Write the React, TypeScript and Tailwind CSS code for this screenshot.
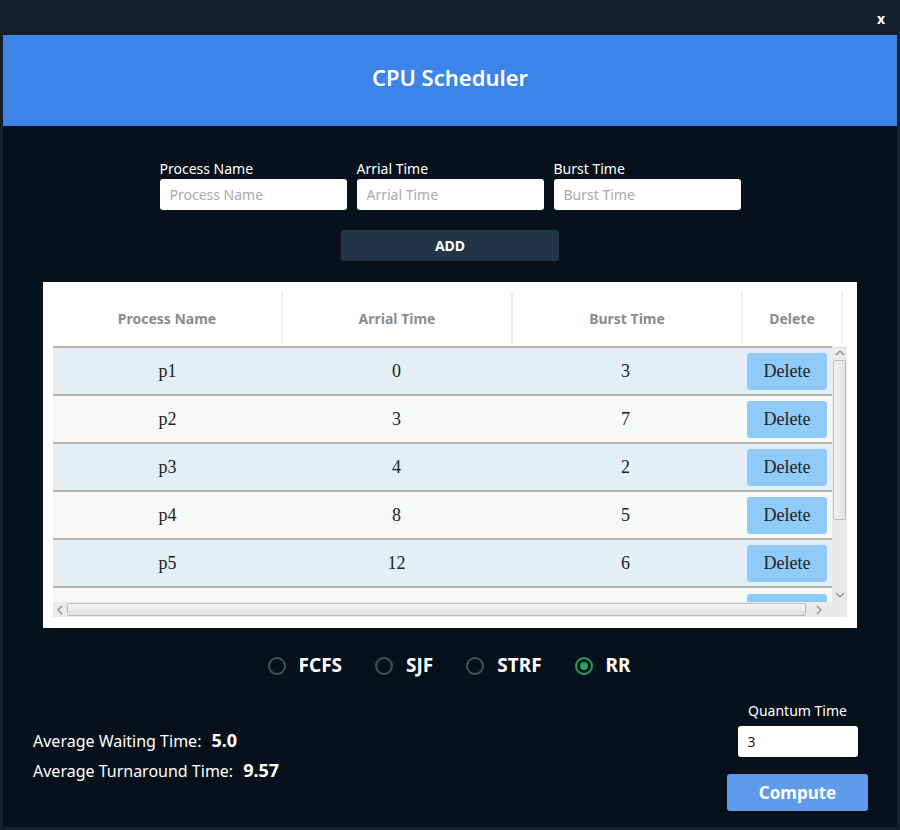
import React from 'react'

type Proc = { name: string; arrival: number; burst: number }

const processes: Proc[] = [
  { name: 'p1', arrival: 0, burst: 3 },
  { name: 'p2', arrival: 3, burst: 7 },
  { name: 'p3', arrival: 4, burst: 2 },
  { name: 'p4', arrival: 8, burst: 5 },
  { name: 'p5', arrival: 12, burst: 6 },
]

const algorithms = ['FCFS', 'SJF', 'STRF', 'RR']

function Chevron({ dir }: { dir: 'up' | 'down' | 'left' | 'right' }) {
  const d = {
    up: 'M1 6 L5 2 L9 6',
    down: 'M1 2 L5 6 L9 2',
    left: 'M6 1 L2 5 L6 9',
    right: 'M2 1 L6 5 L2 9',
  }[dir]
  const vertical = dir === 'up' || dir === 'down'
  return (
    <svg width={vertical ? 10 : 8} height={vertical ? 8 : 10} viewBox={vertical ? '0 0 10 8' : '0 0 8 10'}>
      <path d={d} fill="none" stroke="#8c8c8c" strokeWidth="1.2" />
    </svg>
  )
}

function Field({ label }: { label: string }) {
  return (
    <div className="flex flex-col w-[187px]">
      <span className="text-[14px] leading-[16px] text-white">{label}</span>
      <input
        placeholder={label}
        className="mt-[2px] h-[31px] rounded-[3px] bg-white px-[10px] text-[14px] text-gray-700 placeholder:text-[#a9a9a9] outline-none"
      />
    </div>
  )
}

export default function App() {
  return (
    <div className="w-[900px] h-[830px] bg-[#16202b] px-[3px] pb-[3px] flex flex-col font-['Noto_Sans',sans-serif]">
      {/* title bar */}
      <div className="h-[35px] flex items-center justify-end pr-[12px] pt-[2px]">
        <span className="text-white font-bold text-[14px] leading-none">x</span>
      </div>

      {/* header */}
      <div className="h-[91px] bg-[#3d84e8] flex items-center justify-center pb-[6px]">
        <h1 className="text-white text-[22px] font-semibold">CPU Scheduler</h1>
      </div>

      {/* body */}
      <div className="flex-1 bg-[#06111c] flex flex-col">
        <div className="mt-[35px] flex justify-center gap-[10px]">
          <Field label="Process Name" />
          <Field label="Arrial Time" />
          <Field label="Burst Time" />
        </div>

        <div className="mt-[20px] flex justify-center">
          <button className="w-[218px] h-[31px] rounded-[3px] bg-[#223547] text-white font-bold text-[14px]">
            ADD
          </button>
        </div>

        {/* table panel */}
        <div className="mt-[21px] mx-[40px] h-[346px] bg-white pt-[10px] pl-[10px] pr-[10px]">
          <div className="w-[795px] overflow-hidden">
            <div className="flex h-[54px] w-[790px] text-[14px] font-bold text-[#8c8c8c] pb-[2px]">
              {['Process Name', 'Arrial Time', 'Burst Time'].map((h) => (
                <div key={h} className="w-[230px] flex items-center justify-center border-r-2 border-[#efefef]">
                  {h}
                </div>
              ))}
              <div className="w-[100px] flex items-center justify-center border-r-2 border-[#efefef]">Delete</div>
            </div>
          </div>

          <div className="flex">
            <div className="w-[780px] h-[256px] overflow-hidden border-t-2 border-[#b3b3b3]">
              {processes.map((p, i) => (
                <div
                  key={p.name}
                  className={`flex w-[790px] h-[48px] border-b-2 border-[#b3b3b3] text-[18px] text-[#222] font-['Liberation_Serif',serif] ${
                    i % 2 === 0 ? 'bg-[#e3eff5]' : 'bg-[#f7f9f9]'
                  }`}
                >
                  <div className="w-[229px] flex items-center justify-center">{p.name}</div>
                  <div className="w-[229px] flex items-center justify-center">{p.arrival}</div>
                  <div className="w-[229px] flex items-center justify-center">{p.burst}</div>
                  <div className="w-[103px] flex items-center pl-[7px]">
                    <button className="w-[80px] h-[37px] rounded-[3px] bg-[#90caf9] text-[18px] text-[#222]">
                      Delete
                    </button>
                  </div>
                </div>
              ))}
              {/* next row, scrolled mostly out of view */}
              <div className="flex w-[790px] h-[48px] bg-[#f7f9f9]">
                <div className="w-[687px]" />
                <div className="w-[103px] pl-[7px] pt-[6px]">
                  <div className="w-[80px] h-[37px] rounded-[3px] bg-[#90caf9]" />
                </div>
              </div>
            </div>
            {/* vertical scrollbar */}
            <div className="w-[15px] h-[256px] bg-[#eaeaea] flex flex-col items-center">
              <div className="h-[14px] flex items-center"><Chevron dir="up" /></div>
              <div className="w-[13px] h-[160px] rounded-[2px] border border-[#bcbcbc] bg-gradient-to-r from-[#f2f2f2] to-[#e2e2e2]" />
              <div className="flex-1" />
              <div className="h-[14px] flex items-center"><Chevron dir="down" /></div>
            </div>
          </div>

          {/* horizontal scrollbar */}
          <div className="flex h-[15px]">
            <div className="w-[780px] bg-[#eaeaea] flex items-center">
              <div className="w-[14px] flex justify-center"><Chevron dir="left" /></div>
              <div className="w-[739px] h-[13px] rounded-[2px] border border-[#bcbcbc] bg-gradient-to-b from-[#f2f2f2] to-[#e2e2e2]" />
              <div className="flex-1 flex justify-center"><Chevron dir="right" /></div>
            </div>
            <div className="w-[15px] bg-[#eaeaea]" />
          </div>
        </div>

        {/* algorithm radios */}
        <div className="mt-[25px] flex justify-center items-center gap-[33px] pr-[2px]">
          {algorithms.map((a) => {
            const checked = a === 'RR'
            return (
              <label key={a} className="flex items-center gap-[13px]">
                <span
                  className={`w-[18px] h-[18px] rounded-full border-2 flex items-center justify-center ${
                    checked ? 'border-[#1fa463]' : 'border-[#4f4f4f]'
                  }`}
                >
                  {checked && <span className="w-[8px] h-[8px] rounded-full bg-[#1fa463]" />}
                </span>
                <span className="text-white font-bold text-[19px] leading-[25px]">{a}</span>
              </label>
            )
          })}
        </div>

        {/* results + quantum */}
        <div className="flex-1 flex justify-between pl-[30px] pr-[29px]">
          <div className="flex flex-col pt-[49px] gap-[3px] text-white">
            <div className="flex items-baseline h-[27px]">
              <span className="text-[16px]">Average Waiting Time:</span>
              <span className="ml-[10px] text-[18px] font-bold">5.0</span>
            </div>
            <div className="flex items-baseline h-[27px]">
              <span className="text-[16px]">Average Turnaround Time:</span>
              <span className="ml-[10px] text-[18px] font-bold">9.57</span>
            </div>
          </div>

          <div className="flex flex-col items-center pt-[22px]">
            <span className="text-white text-[14px]">Quantum Time</span>
            <input
              defaultValue="3"
              className="mt-[5px] w-[120px] h-[31px] rounded-[3px] bg-white px-[10px] text-[14px] text-[#222] outline-none"
            />
            <button className="mt-[17px] w-[141px] h-[37px] rounded-[3px] bg-[#5f9bea] text-white font-bold text-[17px]">
              Compute
            </button>
          </div>
        </div>
      </div>
    </div>
  )
}
